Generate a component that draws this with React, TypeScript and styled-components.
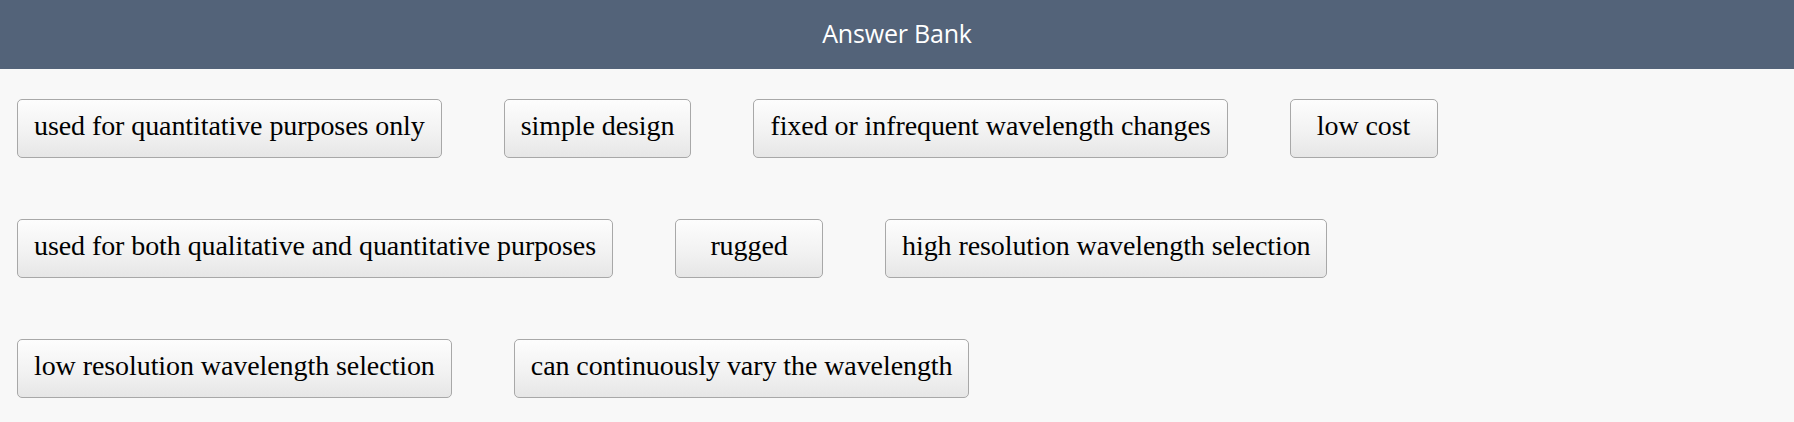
import React from "react";
import styled, { createGlobalStyle } from "styled-components";

const GlobalStyle = createGlobalStyle`
  html, body {
    margin: 0;
    padding: 0;
    background: #f8f8f8;
  }
  * { box-sizing: border-box; }
`;

const Page = styled.div`
  width: 1794px;
  min-height: 422px;
  background: #f8f8f8;
`;

const Header = styled.header`
  height: 69px;
  padding-bottom: 3px;
  background: #536379;
  color: #ffffff;
  display: flex;
  align-items: center;
  justify-content: center;
  font-family: "Open Sans", "Noto Sans", sans-serif;
  font-size: 25px;
  letter-spacing: -0.2px;
`;

const Bank = styled.div`
  display: flex;
  flex-wrap: wrap;
  column-gap: 62px;
  row-gap: 61px;
  padding: 30px 17px 0 17px;
`;

const Chip = styled.button`
  min-width: 148px;
  height: 59px;
  padding: 10px 16px 16px;
  border: 1px solid #a8a8a8;
  border-radius: 5px;
  background: linear-gradient(to bottom, #fdfdfd 0%, #f1f1f1 60%, #e6e6e6 100%);
  font-family: "Liberation Serif", "Times New Roman", serif;
  font-size: 28px;
  line-height: 31px;
  letter-spacing: -0.08px;
  color: #000000;
  text-align: center;
  white-space: nowrap;
  cursor: pointer;
`;

const answers = [
  "used for quantitative purposes only",
  "simple design",
  "fixed or infrequent wavelength changes",
  "low cost",
  "used for both qualitative and quantitative purposes",
  "rugged",
  "high resolution wavelength selection",
  "low resolution wavelength selection",
  "can continuously vary the wavelength",
];

export default function App() {
  return (
    <Page>
      <GlobalStyle />
      <Header>Answer Bank</Header>
      <Bank>
        {answers.map((a) => (
          <Chip key={a}>{a}</Chip>
        ))}
      </Bank>
    </Page>
  );
}
